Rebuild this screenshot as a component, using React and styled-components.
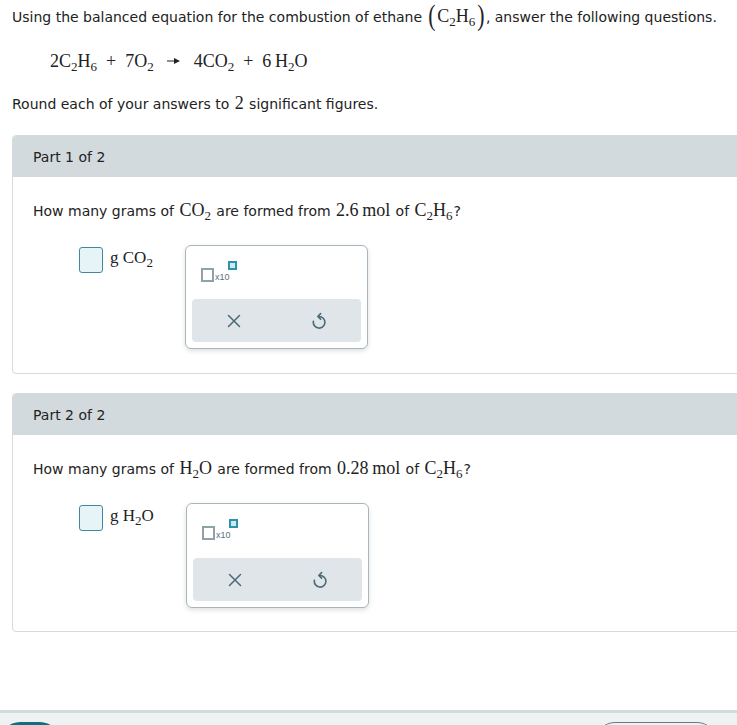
import React from 'react';
import styled, { createGlobalStyle } from 'styled-components';

const GlobalStyle = createGlobalStyle`
  html, body { margin: 0; padding: 0; background: #ffffff; overflow: hidden; }
  body {
    font-family: "DejaVu Sans", "Liberation Sans", sans-serif;
    font-size: 14px;
    color: #222;
  }
`;

const Page = styled.div`
  width: 737px;
  height: 725px;
  overflow: hidden;
  padding-top: 1px;
  box-sizing: border-box;
`;

const Intro = styled.p`
  margin: 4px 0 0 12px;
  line-height: 20px;
  white-space: nowrap;
`;

const Equation = styled.div`
  margin: 24px 0 0 50px;
  height: 20px;
  font-family: "Liberation Serif", serif;
  font-size: 18px;
  display: flex;
  align-items: center;
`;

const Plain = styled.p`
  margin: 22px 0 0 12px;
  line-height: 20px;
`;

const M = styled.span`
  font-family: "Liberation Serif", serif;
  font-size: 18px;
  margin: 0 1px;
`;

const Sub = styled.sub`
  font-size: 13px;
  line-height: 0;
  vertical-align: -4px;
`;

const Paren = styled.span`
  display: inline-block;
  font-family: "Liberation Serif", serif;
  font-size: 29px;
  line-height: 30px;
  margin: -5px 0;
  vertical-align: -3px;
  transform: scaleX(0.75);
`;

const Op = styled.span`
  margin: 0 ${p => p.$gap || 9}px;
`;

const Panel = styled.section`
  margin: ${p => p.$top}px -20px 0 12px;
  border: 1px solid #d3dbde;
  border-radius: 4px;
  overflow: hidden;
`;

const PanelHeader = styled.div`
  height: 41px;
  background: #d2dadd;
  display: flex;
  align-items: center;
  padding-left: 20px;
`;

const PanelBody = styled.div`
  padding: 0 20px ${p => p.$pb}px;
`;

const Question = styled.p`
  margin: 23px 0 0;
  line-height: 20px;
  white-space: nowrap;
`;

const AnswerRow = styled.div`
  margin-top: 24px;
  display: flex;
  align-items: flex-start;
`;

const AnswerField = styled.div`
  margin: 2px 0 0 46px;
  width: 106px;
  display: flex;
  align-items: center;
  height: 26px;
`;

const InputBox = styled.span`
  box-sizing: border-box;
  width: 24px;
  height: 26px;
  border: 1.5px solid #3b8b9b;
  border-radius: 3px;
  background: #e6f4f8;
`;

const Unit = styled.span`
  margin-left: 7px;
  font-family: "Liberation Serif", serif;
  font-size: 17px;
  margin-top: -4px;
`;

const Tools = styled.div`
  box-sizing: border-box;
  width: 183px;
  height: ${p => p.$h}px;
  border: 1px solid #a7b6bc;
  border-radius: 6px;
  background: #fff;
  box-shadow: 0 2px 5px rgba(0, 0, 0, 0.13);
  padding: 0 6px 6px;
  display: flex;
  flex-direction: column;
  margin-left: ${p => p.$ml || 0}px;
`;

const ToolTop = styled.div`
  flex: 1;
  padding: 15px 0 0 9px;
`;

const SciIcon = styled.div`
  display: inline-flex;
  align-items: flex-end;
  height: 21px;
`;

const BaseBox = styled.span`
  box-sizing: border-box;
  width: 13px;
  height: 14px;
  border: 2px solid #8fa2aa;
  background: #fff;
`;

const Times = styled.span`
  font-family: "Liberation Sans", sans-serif;
  font-size: 9px;
  line-height: 9px;
  color: #5a727c;
  margin-left: 1px;
`;

const ExpBox = styled.span`
  align-self: flex-start;
  box-sizing: border-box;
  width: 9px;
  height: 9px;
  border: 2px solid #2c93a8;
  background: #c9ebf2;
  margin-left: -2px;
`;

const ButtonBar = styled.div`
  height: 43px;
  background: #dfe5e8;
  border-radius: 4px;
  display: grid;
  grid-template-columns: 1fr 1fr;
`;

const ToolButton = styled.button`
  border: 0;
  background: transparent;
  padding: 0;
  display: flex;
  align-items: center;
  justify-content: center;
  color: #4b6a76;
`;

const Footer = styled.footer`
  margin-top: 78px;
  height: 60px;
  border-top: 3px solid #d3dadd;
  background: #eef2f3;
  padding-top: 9px;
  display: flex;
  justify-content: space-between;
  align-items: flex-start;
`;

const PrimaryBtn = styled.div`
  width: 60px;
  height: 40px;
  background: #0f6e80;
  border-radius: 20px;
`;

const OutlineBtn = styled.div`
  box-sizing: border-box;
  width: 122px;
  height: 40px;
  border: 1px solid #6c7c83;
  border-radius: 20px;
  margin-right: 20px;
`;

const Arrow = () => (
  <svg width="14" height="8" viewBox="0 0 14 8" style={{ margin: '0 13px 0 13px' }}>
    <line x1="0" y1="4" x2="9" y2="4" stroke="#222" strokeWidth="1" />
    <polygon points="7,1 13,4 7,7" fill="#222" />
  </svg>
);

const XIcon = () => (
  <svg width="14" height="14" viewBox="0 0 14 14">
    <path d="M1.5 1.5 L12.5 12.5 M12.5 1.5 L1.5 12.5" stroke="currentColor" strokeWidth="1.5" strokeLinecap="round" fill="none" />
  </svg>
);

const UndoIcon = () => (
  <svg width="14" height="17" viewBox="0 0 14 17">
    <path d="M7 4.5 A5.8 5.8 0 1 1 1.4 9.3" stroke="currentColor" strokeWidth="1.6" strokeLinecap="round" fill="none" />
    <path d="M8.6 1.6 L5.8 4.5 L8.6 7.2" stroke="currentColor" strokeWidth="1.6" strokeLinecap="round" strokeLinejoin="round" fill="none" />
  </svg>
);

const C2H6 = () => (
  <M>C<Sub>2</Sub>H<Sub>6</Sub></M>
);

const ToolPanel = ({ h, ml }) => (
  <Tools $h={h} $ml={ml}>
    <ToolTop>
      <SciIcon>
        <BaseBox />
        <Times>x10</Times>
        <ExpBox />
      </SciIcon>
    </ToolTop>
    <ButtonBar>
      <ToolButton aria-label="clear"><XIcon /></ToolButton>
      <ToolButton aria-label="undo"><UndoIcon /></ToolButton>
    </ButtonBar>
  </Tools>
);

const Part = ({ top, title, question, unit, toolsH, toolsMl, pb }) => (
  <Panel $top={top}>
    <PanelHeader>{title}</PanelHeader>
    <PanelBody $pb={pb}>
      <Question>{question}</Question>
      <AnswerRow>
        <AnswerField>
          <InputBox />
          <Unit>{unit}</Unit>
        </AnswerField>
        <ToolPanel h={toolsH} ml={toolsMl} />
      </AnswerRow>
    </PanelBody>
  </Panel>
);

export default function App() {
  return (
    <>
      <GlobalStyle />
      <Page>
        <Intro>
          Using the balanced equation for the combustion of ethane{' '}
          <Paren>(</Paren><C2H6 /><Paren>)</Paren>, answer the following questions.
        </Intro>
        <Equation>
          <span>2C<Sub>2</Sub>H<Sub>6</Sub></span>
          <Op>+</Op>
          <span>7O<Sub>2</Sub></span>
          <Arrow />
          <span>4CO<Sub>2</Sub></span>
          <Op>+</Op>
          <span>6&thinsp;H<Sub>2</Sub>O</span>
        </Equation>
        <Plain>
          Round each of your answers to <M>2</M> significant figures.
        </Plain>
        <Part
          top={21}
          title="Part 1 of 2"
          question={<>How many grams of <M>CO<Sub>2</Sub></M> are formed from <M>2.6&thinsp;mol</M> of <C2H6 />?</>}
          unit={<>g CO<Sub>2</Sub></>}
          toolsH={104}
          toolsMl={0}
          pb={24}
        />
        <Part
          top={19}
          title="Part 2 of 2"
          question={<>How many grams of <M>H<Sub>2</Sub>O</M> are formed from <M>0.28&thinsp;mol</M> of <C2H6 />?</>}
          unit={<>g H<Sub>2</Sub>O</>}
          toolsH={105}
          toolsMl={1}
          pb={23}
        />
        <Footer>
          <PrimaryBtn />
          <OutlineBtn />
        </Footer>
      </Page>
    </>
  );
}
